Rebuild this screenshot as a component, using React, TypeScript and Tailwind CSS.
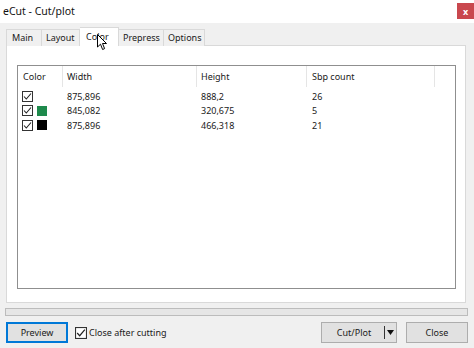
import React from "react";

const font = { fontFamily: '"Noto Sans", "Segoe UI", Arial, sans-serif' };

function Check({ size = 11 }: { size?: number }) {
  return (
    <svg width={size} height={size} viewBox="0 0 11 11" className="block">
      <rect x="0.5" y="0.5" width="10" height="10" fill="#fff" stroke="#333" />
      <path d="M2 5.5 L4.3 8 L9 2.5" fill="none" stroke="#222" strokeWidth="1.1" />
    </svg>
  );
}

const rows = [
  { color: null as string | null, w: "875,896", h: "888,2", s: "26" },
  { color: "#1e8a4c", w: "845,082", h: "320,675", s: "5" },
  { color: "#000000", w: "875,896", h: "466,318", s: "21" },
];

export default function App() {
  return (
    <div className="w-[474px] h-[348px] bg-[#f0f0f0] text-[#1a1a1a] text-[9px] relative overflow-hidden" style={font}>
      {/* Title bar */}
      <div className="h-[23px] bg-white flex items-start justify-between">
        <div className="pl-[3px] pt-[4px] text-[10.5px] text-[#111]">eCut - Cut/plot</div>
        <div className="mt-[3px] w-[17px] h-[16px] bg-[#c9484e] flex items-center justify-center text-white text-[9px] font-bold leading-none">x</div>
      </div>

      {/* Tabs */}
      <div className="mt-[4px] pl-[6px] flex items-end h-[19px] relative z-10">
        <div className="h-[17px] w-[36px] border border-[#d9d9d9] border-b-0 bg-[#f0f0f0] flex items-center pl-[5px]">Main</div>
        <div className="h-[17px] w-[38px] border border-[#d9d9d9] border-l-0 border-b-0 bg-[#f0f0f0] flex items-center pl-[4px]">Layout</div>
        <div className="h-[19px] w-[39px] border border-[#d9d9d9] border-l-0 border-b-0 bg-white flex items-start pt-[2px] pl-[6px]">Color</div>
        <div className="h-[17px] w-[45px] border border-[#d9d9d9] border-l-0 border-b-0 bg-[#f0f0f0] flex items-center pl-[4px]">Prepress</div>
        <div className="h-[17px] w-[41px] border border-[#d9d9d9] border-l-0 border-b-0 bg-[#f0f0f0] flex items-center pl-[4px]">Options</div>
      </div>

      {/* Panel */}
      <div className="ml-[6px] -mt-px w-[460px] h-[258px] bg-white border border-[#d9d9d9] pt-[19px] pl-[10px]">
        <div className="w-[439px] h-[224px] border border-[#8f8f8f] bg-white">
          <div className="flex h-[21px] items-center">
            <div className="w-[45px] h-full pl-[5px] flex items-center border-r border-[#e5e5e5]">Color</div>
            <div className="w-[134px] h-full pl-[4px] flex items-center border-r border-[#e5e5e5]">Width</div>
            <div className="w-[110px] h-full pl-[4px] flex items-center border-r border-[#e5e5e5]">Height</div>
            <div className="w-[128px] h-full pl-[5px] flex items-center border-r border-[#e5e5e5]">Sbp count</div>
          </div>
          <div className="pt-[2px]">
            {rows.map((r, i) => (
              <div key={i} className="flex h-[14.5px] items-center">
                <div className="w-[45px] pl-[4px] flex items-center gap-[4px]">
                  <Check />
                  {r.color && <div className="w-[10px] h-[10px]" style={{ backgroundColor: r.color }} />}
                </div>
                <div className="w-[134px] pl-[4px]">{r.w}</div>
                <div className="w-[110px] pl-[4px]">{r.h}</div>
                <div className="w-[128px] pl-[5px]">{r.s}</div>
              </div>
            ))}
          </div>
        </div>
      </div>

      {/* Progress bar */}
      <div className="ml-[5px] mt-[5px] w-[463px] h-[8px] bg-[#e6e6e6] border border-[#bcbcbc]" />

      {/* Bottom buttons */}
      <div className="mt-[6px] flex items-center px-[6px]">
        <div className="w-[62px] h-[21px] bg-[#e1e1e1] border-2 border-[#0078d7] flex items-center justify-center">Preview</div>
        <div className="ml-[7px] flex items-center gap-[2px]">
          <Check size={12} />
          <span>Close after cutting</span>
        </div>
        <div className="ml-auto w-[76px] h-[21px] bg-[#e1e1e1] border border-[#adadad] flex items-center">
          <div className="flex-1 text-center pl-[2px]">Cut/Plot</div>
          <div className="w-px h-[13px] bg-[#333]" />
          <div className="w-[11px] flex items-center justify-center">
            <svg width="7" height="5" viewBox="0 0 7 5"><path d="M0 0 H7 L3.5 5 Z" fill="#111" /></svg>
          </div>
        </div>
        <div className="ml-[9px] w-[62px] h-[21px] bg-[#e1e1e1] border border-[#adadad] flex items-center justify-center">Close</div>
      </div>

      {/* Mouse cursor */}
      <svg className="absolute left-[97px] top-[34px] z-20" width="11" height="17" viewBox="0 0 11 17">
        <path d="M0.5 0.5 L0.5 13 L3.5 10.2 L5.6 15.5 L7.6 14.6 L5.5 9.5 L9.5 9.5 Z" fill="#fff" stroke="#000" strokeWidth="1" strokeLinejoin="round" />
      </svg>
    </div>
  );
}
